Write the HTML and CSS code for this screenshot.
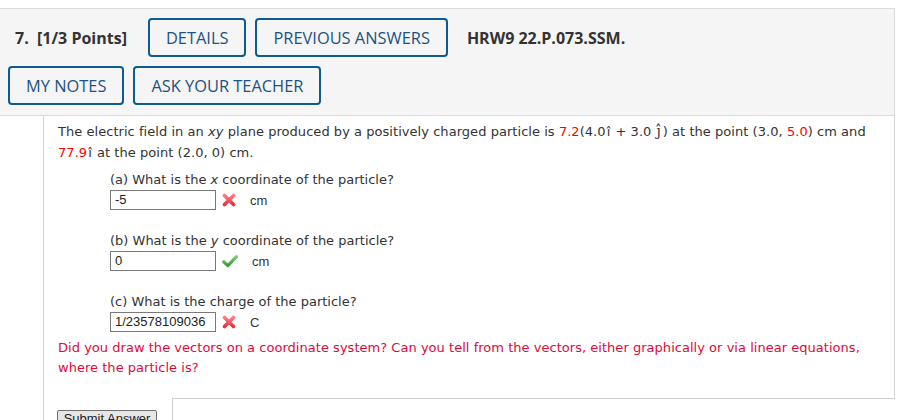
FILE: index.html
```html
<!DOCTYPE html>
<html>
<head>
<meta charset="utf-8">
<link rel="stylesheet" href="styles.css">
</head>
<body>
<div class="header">
  <div class="hrow hrow-top">
    <span class="qlabel">7.&nbsp; [1/3 Points]</span>
    <div class="btns">
      <span class="hbtn">DETAILS</span>
      <span class="hbtn">PREVIOUS ANSWERS</span>
    </div>
    <span class="qcode">HRW9 22.P.073.SSM.</span>
  </div>
  <div class="hrow hrow-bottom">
    <span class="hbtn">MY NOTES</span>
    <span class="hbtn">ASK YOUR TEACHER</span>
  </div>
</div>
<div class="panel">
  <p class="stem">The electric field in an <i>xy</i> plane produced by a positively charged particle is <span class="red">7.2</span>(4.0<span class="ihat">î</span> + 3.0<span class="jhat">ĵ</span>) at the point (3.0, <span class="red">5.0</span>) cm and <span class="red">77.9</span><span class="ihat">î</span> at the point (2.0, 0) cm.</p>
  <div class="part">
    <div class="question">(a) What is the <i>x</i> coordinate of the particle?</div>
    <div class="answer">
      <span class="field">-5</span>
      <svg class="mark" width="14" height="14" viewBox="0 0 14 14"><defs><linearGradient id="xg" x1="0" y1="0" x2="0" y2="1"><stop offset="0" stop-color="#ff7b84"/><stop offset="1" stop-color="#e5323f"/></linearGradient></defs><path d="M2.5 2.5 L11.5 11.5 M11.5 2.5 L2.5 11.5" stroke="url(#xg)" stroke-width="3.6" stroke-linecap="round"/></svg>
      <span class="unit">cm</span>
    </div>
  </div>
  <div class="part">
    <div class="question">(b) What is the <i>y</i> coordinate of the particle?</div>
    <div class="answer">
      <span class="field">0</span>
      <svg class="mark check" width="16" height="14" viewBox="0 0 16 14"><defs><linearGradient id="cg" x1="0" y1="0" x2="0" y2="1"><stop offset="0" stop-color="#7ccf6e"/><stop offset="1" stop-color="#3e9a3a"/></linearGradient></defs><path d="M1.8 7.8 L5.8 11.6 L14.5 2.6" fill="none" stroke="url(#cg)" stroke-width="3.2" stroke-linecap="round" stroke-linejoin="round"/></svg>
      <span class="unit">cm</span>
    </div>
  </div>
  <div class="part">
    <div class="question">(c) What is the charge of the particle?</div>
    <div class="answer">
      <span class="field">1/23578109036</span>
      <svg class="mark" width="14" height="14" viewBox="0 0 14 14"><defs><linearGradient id="xg2" x1="0" y1="0" x2="0" y2="1"><stop offset="0" stop-color="#ff7b84"/><stop offset="1" stop-color="#e5323f"/></linearGradient></defs><path d="M2.5 2.5 L11.5 11.5 M11.5 2.5 L2.5 11.5" stroke="url(#xg2)" stroke-width="3.6" stroke-linecap="round"/></svg>
      <span class="unit">C</span>
    </div>
  </div>
  <p class="hint">Did you draw the vectors on a coordinate system? Can you tell from the vectors, either graphically or via linear equations, where the particle is?</p>
</div>
<div class="footer">
  <div class="footer-left">
    <button class="submit">Submit Answer</button>
  </div>
  <div class="footer-right"></div>
</div>
</body>
</html>
```

FILE: styles.css
```css
html, body {
  margin: 0;
  padding: 0;
  background: #fff;
}
html {
  overflow: hidden;
}
body {
  padding-top: 8px;
  width: 902px;
  height: 420px;
  box-sizing: border-box;
  overflow: hidden;
}
.header {
  width: 894px;
  background: #f5f5f5;
  border-top: 1px solid #dcdcdc;
  border-bottom: 1px solid #dcdcdc;
  border-right: 1px solid #dcdcdc;
  padding: 9px 0 10px 0;
  font-family: "Open Sans", sans-serif;
  font-size: 16px;
  color: #333;
}
.hrow {
  display: flex;
  align-items: center;
  gap: 9px;
}
.hrow-top {
  padding-left: 15px;
}
.hrow-bottom {
  margin-top: 9px;
  padding-left: 8px;
}
.qlabel {
  font-weight: 700;
  margin-right: 12px;
}
.btns {
  display: flex;
  gap: 9px;
}
.qcode {
  font-weight: 700;
  margin-left: 10px;
}
.hbtn {
  box-sizing: border-box;
  height: 39px;
  display: flex;
  align-items: center;
  padding: 0 16px;
  border: 2px solid #0f5b90;
  border-radius: 4px;
  color: #1e5283;
  background: #f5f5f5;
  white-space: nowrap;
  font-size: 16.4px;
}
.panel {
  margin-left: 43px;
  border-left: 1px solid #d4d4d4;
  border-right: 1px solid #d4d4d4;
  padding: 5px 14px 20px 14px;
  box-sizing: border-box;
  width: 852px;
  font-family: "DejaVu Sans", Verdana, sans-serif;
  font-size: 13px;
  color: #333;
}
.stem {
  margin: 0;
  line-height: 21px;
  padding-right: 6px;
  letter-spacing: 0.045px;
}
.red {
  color: #f00;
}
.ihat {
  padding: 0 1px 0 1px;
}
.jhat {
  font-family: "DejaVu Serif", serif;
  font-size: 14px;
  margin-left: 5px;
  margin-right: 2px;
}
.part {
  margin-left: 52px;
  margin-top: 8px;
}
.part + .part {
  margin-top: 22px;
}
.question {
  line-height: 18px;
}
.answer {
  display: flex;
  align-items: center;
  height: 20px;
  margin-top: 1px;
}
.field {
  box-sizing: border-box;
  width: 106px;
  height: 20px;
  border: 1px solid #7a7a7a;
  padding: 0 4px;
  font-family: "Liberation Sans", Arial, sans-serif;
  font-size: 13px;
  line-height: 18px;
  color: #222;
  background: #fff;
}
.mark {
  margin-left: 6px;
  display: block;
}
.unit {
  margin-left: 14px;
  font-family: "Liberation Sans", Arial, sans-serif;
  font-size: 13px;
  color: #333;
}
.hint {
  margin: 6px 0 0 0;
  line-height: 20px;
  color: #dc0a3a;
  letter-spacing: 0.03px;
}
.footer {
  margin-left: 43px;
  width: 852px;
  display: flex;
  height: 40px;
}
.footer-left {
  width: 129px;
  box-sizing: border-box;
  border-left: 1px solid #d4d4d4;
  padding: 12px 0 0 13px;
}
.footer-right {
  flex: 1;
  border-top: 1px solid #cfcfcf;
  border-left: 1px solid #cfcfcf;
}
.submit {
  font-family: "Liberation Sans", Arial, sans-serif;
  font-size: 13px;
  line-height: 14px;
  color: #222;
  background: #e6e6e6;
  border: 1px solid #707070;
  border-radius: 2px;
  padding: 0;
  width: 100px;
  height: 17px;
  white-space: nowrap;
  display: block;
}
```
